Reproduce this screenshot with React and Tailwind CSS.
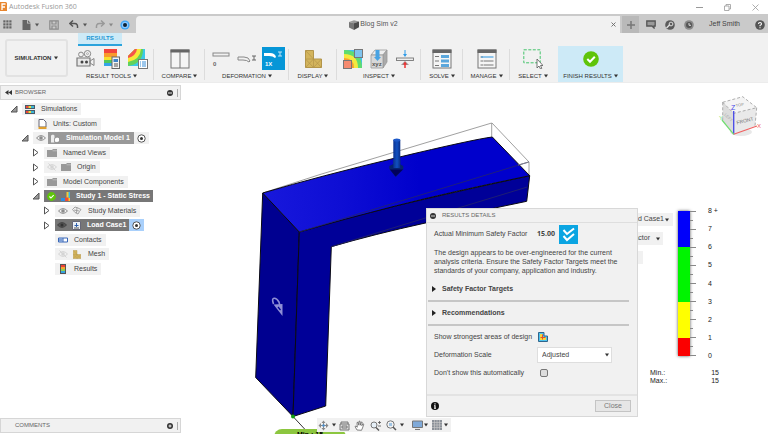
import { useState } from "react";

const Caret = ({ className = "text-[#333]" }) => (
  <svg className={`w-1 h-1 shrink-0 ${className}`} viewBox="0 0 8 8" fill="currentColor">
    <path d="M0 1h8L4 7z" />
  </svg>
);

const Icon = ({ box = "0 0 20 20", className = "w-5 h-5", children }) => (
  <svg className={`shrink-0 ${className}`} viewBox={box} fill="none">
    {children}
  </svg>
);

const AppGrid = () => (
  <Icon box="0 0 9 9" className="w-[9px] h-[9px]">
    {[0, 3, 6].map((y) =>
      [0, 3, 6].map((x) => <rect key={`${x}${y}`} x={x + 0.3} y={y + 0.3} width="2.2" height="2.2" fill="#666" />)
    )}
  </Icon>
);

const FileIcon = () => (
  <Icon box="0 0 9 10" className="w-[9px] h-[10px]">
    <path d="M.5 0H5v3.5h3.5V10h-8z" fill="#666" />
    <path d="M5.8 0l2.7 2.8H5.8z" fill="#666" />
  </Icon>
);

const SaveIcon = () => (
  <Icon box="0 0 10 10" className="w-[10px] h-[10px]">
    <path d="M.8.8h8.4v8.4H.8z" stroke="#8a8a8a" strokeWidth="1.2" />
    <path d="M3 1v3h4V1M3 9V6h4v3" stroke="#8a8a8a" strokeWidth="1.2" />
  </Icon>
);

const UndoIcon = ({ flip }) => (
  <Icon box="0 0 10 9" className={flip ? "w-[10px] h-[9px] -scale-x-100 text-[#999]" : "w-[10px] h-[9px] text-[#555]"}>
    <path d="M4 .5L.8 3.5 4 6.5M1 3.5h4.5C8 3.5 8.8 5 8.5 8" stroke="currentColor" strokeWidth="1.5" />
  </Icon>
);

const ExtensionIcon = () => (
  <Icon box="0 0 10 10" className="w-[10px] h-[10px]">
    <circle cx="5" cy="5" r="4.6" fill="#3ba5f5" />
    <circle cx="5" cy="5" r="3.2" fill="#8cc8ff" />
    <circle cx="5" cy="5" r="2" fill="#0d2233" />
  </Icon>
);

const Cube = () => (
  <Icon box="0 0 10 10" className="w-[10px] h-[10px]">
    <path d="M0 2l5-1.7L10 1.500 5 3.200z" fill="#999" />
    <path d="M0 2l5 1.300V10L0 7.500z" fill="#777" />
    <path d="M5 3.300l5-1.700v5.700L5 10z" fill="#4c4c4c" />
  </Icon>
);

const Camera = () => (
  <Icon className="w-[19px] h-[18px]" box="0 0 19 18">
    <circle cx="5" cy="4.500" r="2.400" stroke="#888" />
    <circle cx="11.500" cy="3.700" r="3.200" stroke="#888" />
    <circle cx="11.500" cy="3.700" r="1" stroke="#888" strokeWidth=".6" />
    <path d="M1 8h13v8H1z" fill="#e8e8e8" stroke="#777" strokeWidth="1.200" />
    <path d="M14 11l4-2.500v7L14 13z" stroke="#888" />
    <circle cx="6" cy="12" r="1.500" fill="#444" />
    <circle cx="10.500" cy="12" r="1.500" fill="#444" />
  </Icon>
);

const ResultDevice = () => (
  <Icon className="w-[18px] h-5" box="0 0 18 20">
    <path d="M1 0h13v4H1z" fill="#f2453c" />
    <path d="M1 4h13v4H1z" fill="#f99a2c" />
    <path d="M1 8h13v3H1z" fill="#f7e02d" />
    <path d="M1 11h13v3H1z" fill="#52c95a" />
    <path d="M1 14h13v3H1z" fill="#34a4e8" />
    <rect x="9" y="8" width="7.500" height="11.500" fill="#f4f4f4" stroke="#666" />
    <path d="M10.500 10h4.500v3h-4.500z" fill="#3b83c8" />
    <path d="M11 15h4M11 17h4" stroke="#555" />
  </Icon>
);

const ResultLegend = () => (
  <Icon className="w-5 h-5">
    <path d="M0 17V7L7 0h10v17z" fill="#3cc8e8" />
    <path d="M0 17V7L7 0h8Q15 15 0 17z" fill="#62d25a" />
    <path d="M0 13V7L7 0h6Q12 11 0 13z" fill="#f7e838" />
    <path d="M0 9V7L7 0h2Q8 7 0 9z" fill="#f5544a" />
    <rect x="10.500" y="10.500" width="9" height="9" fill="#fff" stroke="#777" />
    <path d="M12 13h1M12 15h1M12 17h1M14 13h4M14 15h4M14 17h4" stroke="#3b8fd8" />
  </Icon>
);

const CompareIcon = () => (
  <Icon>
    <rect x="1" y="1" width="18" height="18" fill="#f5f5f5" stroke="#777" />
    <path d="M.5.500h19v3H.5z" fill="#666" />
    <path d="M10 3v16" stroke="#777" />
  </Icon>
);

const FlatBeam = () => (
  <Icon className="w-5 h-5">
    <rect x="2" y="4" width="16" height="3" stroke="#888" />
    <text x="2" y="17" fontSize="6" fontWeight="bold" fill="#666">0</text>
  </Icon>
);

const BentBeam = () => (
  <Icon className="w-5 h-5">
    <path d="M1 8h6q5 0 6 4l-1 1q-2-2-6-2H1z" stroke="#888" />
    <path d="M15 7h4M15 11h4M17 7v4" stroke="#666" />
  </Icon>
);

const BentBeam1x = () => (
  <Icon className="w-5 h-5">
    <path d="M1 4h6q5 0 6 4l-1 1Q10 7 6 7H1z" fill="#fff" />
    <path d="M15 3h4M15 7h4M17 3v4" stroke="#bfe3f7" />
    <text x="2" y="17" fontSize="6" fontWeight="bold" fill="#fff">1X</text>
  </Icon>
);

const MeshIcon = ({ className = "w-[17px] h-[18px]" }) => (
  <Icon className={className} box="0 0 17 18">
    <path d="M.5.500h8v8.500h8v8.500H.5z" fill="#d3b45c" stroke="#b3954a" />
    <path d="M.5 9h8v8.500M.5.500l8 8.500M.5 9l8 8.500M8.500 9l8 8.500M.5 17.500l8-8.500M8.500 17.500l8-8.500" stroke="#b3954a" strokeWidth=".7" />
  </Icon>
);

const ProbeIcon = () => (
  <Icon>
    <path d="M1 1h18v18H1z" fill="#41bdf0" />
    <path d="M1 1q18 0 18 18H1z" fill="#5fdc70" />
    <path d="M1 5q14 0 14 14H1z" fill="#f4ea3f" />
    <path d="M1 9q10 0 10 10H1z" fill="#f7a030" />
    <rect x="11.500" y=".500" width="8" height="8" fill="#7ec3ee" stroke="#777" />
    <rect x=".500" y="11.500" width="8" height="8" fill="#f58b70" stroke="#777" />
  </Icon>
);

const PointIcon = () => (
  <Icon className="w-[18px] h-5" box="0 0 18 20">
    <path d="M1 6l4-5h12l-4 5z" fill="#eee" stroke="#999" strokeWidth=".8" />
    <path d="M13 6l4-5v12l-4 6z" fill="#aaa" stroke="#999" strokeWidth=".8" />
    <path d="M1 6h12v13H1z" fill="#d8d8d8" stroke="#999" strokeWidth=".8" />
    <path d="M5.500 1h4v7h1.500l-3.500 4L4 8h1.500z" fill="#48a3e3" />
    <text x="2" y="17" fontSize="6" fontWeight="bold" fill="#555">xyz</text>
  </Icon>
);

const ReactionIcon = () => (
  <Icon className="w-[18px] h-5" box="0 0 18 20">
    <rect x=".500" y="9" width="17" height="2.500" fill="#eee" stroke="#777" strokeWidth=".9" />
    <path d="M9 1v5" stroke="#2f9be8" />
    <path d="M7 5h4L9 8z" fill="#2f9be8" />
    <path d="M5 16l4-4 4 4z" fill="#999" />
    <path d="M9 14v5" stroke="#e33" strokeWidth="1.500" />
    <path d="M7 15.500h4L9 12.500z" fill="#e33" />
  </Icon>
);

const SolveIcon = () => (
  <Icon>
    <rect x="1" y="1" width="18" height="18" fill="#f5f5f5" stroke="#777" />
    <path d="M.5.500h19v3.500H.5z" fill="#666" />
    <path d="M3 7.500h4M3 12h4M3 16.500h4" stroke="#777" />
    <path d="M9 6h8v3H9zM9 10.500h8v3H9zM9 15h8v3H9z" fill="#5ba7dc" />
  </Icon>
);

const ManageIcon = () => (
  <Icon>
    <rect x="1" y="1" width="18" height="18" fill="#f5f5f5" stroke="#777" />
    <path d="M.5.500h19v3.500H.5z" fill="#666" />
    <path d="M3.500 8H6M3.500 12H6M3.500 16H6M6.500 12h10M6.500 16h10" stroke="#777" />
    <path d="M4 8h12.500" stroke="#48a3e3" strokeWidth="1.200" />
  </Icon>
);

const SelectIcon = () => (
  <Icon>
    <path d="M.8.800h16.400v13H.8z" stroke="#45c46c" strokeDasharray="3 1.500" />
    <path d="M14 10v9l2-2 1.500 3 1.300-.7-1.300-2.800H20z" fill="#fff" stroke="#555" strokeWidth=".8" />
  </Icon>
);

const CheckBadge = ({ className }) => (
  <Icon box="0 0 16 16" className={className}>
    <circle cx="8" cy="8" r="7.800" fill="#5fc40a" />
    <path d="M4.300 8l2.700 2.700 4.800-5" stroke="#fff" strokeWidth="2" />
  </Icon>
);

const Expander = ({ open }) => (
  <button className="w-3 shrink-0 flex items-center" aria-label={open ? "Collapse" : "Expand"}>
    {open ? (
      <Icon box="0 0 8 8" className="w-2 h-2">
        <path d="M7 1v6H1z" fill="#999" stroke="#555" />
      </Icon>
    ) : (
      <Icon box="0 0 7 9" className="w-[7px] h-[9px]">
        <path d="M1.500 1l4.500 3.500L1.500 8z" fill="#fff" stroke="#555" />
      </Icon>
    )}
  </button>
);

const Eye = ({ dim }) => (
  <Icon box="0 0 10 8" className={dim ? "w-[10px] h-2 text-[#d4d4d4]" : "w-[10px] h-2 text-[#8c8c8c]"}>
    <path d="M.5 4Q5-.8 9.500 4 5 8.800.5 4z" stroke="currentColor" />
    <circle cx="5" cy="4" r="1.800" fill="currentColor" />
    {dim && <path d="M1.500.500l7 7" stroke="currentColor" />}
  </Icon>
);

const DarkEye = () => (
  <Icon box="0 0 10 8" className="w-[10px] h-2">
    <path d="M.5 4Q5-.8 9.500 4 5 8.800.5 4z" fill="#555" stroke="#444" />
    <circle cx="5" cy="4" r="1.500" fill="#333" />
  </Icon>
);

const Folder = () => (
  <Icon box="0 0 10 8" className="w-[10px] h-2">
    <path d="M0 1h5l1-1h4v8H0z" fill="#999" />
    <path d="M5.500 1.800H10" stroke="#ccc" strokeWidth=".7" />
  </Icon>
);

const StackIcon = () => (
  <Icon box="0 0 10 9" className="w-[10px] h-[9px]">
    <path d="M0 0h10v4H0zM0 5h10v4H0z" fill="#4a5a68" />
    <path d="M1 1h2.500v2H1zM1 6h2.500v2H1z" fill="#f0453a" />
    <path d="M3.500 1H6v2H3.500zM3.500 6H6v2H3.500z" fill="#f3d93a" />
    <path d="M6 1h3v2H6zM6 6h3v2H6z" fill="#3cb8d8" />
  </Icon>
);

const UnitsIcon = () => (
  <Icon box="0 0 9 10" className="w-[9px] h-[10px]">
    <path d="M1 .500h4.500L8 3v5H1z" fill="#fff" stroke="#667" />
    <path d="M.5 7.800h8V10h-8z" fill="#e0a030" />
  </Icon>
);

const ModelIcon = () => (
  <Icon box="0 0 10 9" className="w-[10px] h-[9px]">
    <path d="M1 1.500L3 .500l1.500 1v7H1z" fill="#eee" />
    <path d="M4.500 4.500L7 3l2.500 1v3.500l-2.500 1-2.500-.5z" fill="#fff" stroke="#777" strokeWidth=".6" />
  </Icon>
);

const StressIcon = () => (
  <Icon box="0 0 9 9" className="w-[9px] h-[9px]">
    <path d="M5.500 0H9v9H5.500z" fill="#f7c832" />
    <path d="M7.500 0H9v6H7.500z" fill="#35b5e8" />
    <path d="M0 6h5v3H0z" fill="#2f8de0" />
    <path d="M4 5.500h3.500V9H4z" fill="#ef4b35" />
  </Icon>
);

const MaterialIcon = () => (
  <Icon box="0 0 10 9" className="w-[10px] h-[9px]">
    <path d="M.5 3.500L3 1l3 1 3 1.500-1.500 2L6 8 3 6.500z M2 4l5 1M5 1.500L4.500 7" stroke="#999" strokeWidth=".9" />
  </Icon>
);

const LoadIcon = () => (
  <Icon box="0 0 9 9" className="w-[9px] h-[9px]">
    <path d="M.5.500h8v8h-8z" fill="#e9eef5" stroke="#667" />
    <path d="M4.500 2v4M2.500 4.500h4" stroke="#2d5fae" />
    <path d="M2 7h5" stroke="#555" />
  </Icon>
);

const ContactIcon = () => (
  <Icon box="0 0 10 6" className="w-[10px] h-[6px]">
    <path d="M.5 1h9v4h-9z" fill="#fff" stroke="#3867b8" />
    <path d="M1 1h3.500v4H1z" fill="#7d9fd6" />
    <path d="M5 1v4" stroke="#3867b8" />
  </Icon>
);

const ResultsIcon = () => (
  <Icon box="0 0 6 10" className="w-[6px] h-[10px]">
    <path d="M0 0h6v10H0z" fill="#555" />
    <path d="M1 1h4v2H1z" fill="#ee4035" />
    <path d="M1 3h4v2H1z" fill="#f6a430" />
    <path d="M1 5h4v2H1z" fill="#8fd14f" />
    <path d="M1 7h4v2H1z" fill="#35a4e0" />
  </Icon>
);

const RadioDot = () => (
  <Icon box="0 0 9 9" className="w-[9px] h-[9px]">
    <circle cx="4.500" cy="4.500" r="3.700" fill="#fff" stroke="#444" strokeWidth=".9" />
    <circle cx="4.500" cy="4.500" r="1.500" fill="#333" />
  </Icon>
);

const light = "bg-[#f1f1f1] text-[#444] pl-px pr-1";
const dark = "bg-[#777] text-white font-bold pr-[3px]";

const tree = [
  { name: "Simulations", pad: "pl-[10px]", open: true, icons: [StackIcon], chip: light },
  { name: "Units: Custom", pad: "pl-[22px]", icons: [UnitsIcon], chip: light },
  { name: "Simulation Model 1", pad: "pl-[21px]", open: true, outer: [Eye], icons: [ModelIcon], chip: "bg-[#999] text-white font-bold pr-1", radio: "bg-[#f1f1f1]" },
  { name: "Named Views", pad: "pl-[32px]", open: false, icons: [Folder], chip: light },
  { name: "Origin", pad: "pl-[32px]", open: false, icons: [() => <Eye dim />, Folder], chip: light },
  { name: "Model Components", pad: "pl-[32px]", open: false, icons: [Folder], chip: light },
  { name: "Study 1 - Static Stress", pad: "pl-[32px]", open: true, icons: [() => <CheckBadge className="w-[9px] h-[9px]" />, StressIcon], chip: dark },
  { name: "Study Materials", pad: "pl-[43px]", open: false, icons: [Eye, MaterialIcon], chip: light },
  { name: "Load Case1", pad: "pl-[43px]", open: false, icons: [DarkEye, LoadIcon], chip: dark, radio: "bg-[#a9d0fb]" },
  { name: "Contacts", pad: "pl-[43px]", icons: [ContactIcon], chip: light },
  { name: "Mesh", pad: "pl-[43px]", icons: [() => <Eye dim />, () => <MeshIcon className="w-2 h-[9px]" />], chip: light },
  { name: "Results", pad: "pl-[43px]", icons: [ResultsIcon], chip: light },
];

function TreeRow({ row }) {
  return (
    <li className={`flex items-center ${row.pad}`}>
      {row.open === undefined ? <span className="w-3" /> : <Expander open={row.open} />}
      {row.outer?.map((I, i) => (
        <span key={i} className="w-[15px] h-3 bg-[#f1f1f1] flex items-center justify-center">
          <I />
        </span>
      ))}
      <span className={`flex items-center h-3 ${row.chip}`}>
        {row.icons.map((I, i) => (
          <span key={i} className="w-[14px] flex justify-center">
            <I />
          </span>
        ))}
        <span className="ml-1 whitespace-nowrap">{row.name}</span>
      </span>
      {row.radio && (
        <span className={`w-[15px] h-3 flex items-center justify-center ${row.radio}`}>
          <RadioDot />
        </span>
      )}
    </li>
  );
}

function PanelBar({ title, icon, collapse }) {
  return (
    <div className="h-[15px] flex items-center border border-[#d6d6d6] bg-[#f1f1f1] text-[6px] text-[#666] pr-px">
      <span className="w-[14px] flex justify-center">
        {collapse && (
          <Icon box="0 0 7 5" className="w-[7px] h-[5px]">
            <path d="M3.500 0v5L0 2.500zM7 0v5L3.500 2.500z" fill="#333" />
          </Icon>
        )}
      </span>
      <span className="flex-1">{title}</span>
      <Icon box="0 0 6 6" className="w-[6px] h-[6px]">
        <circle cx="3" cy="3" r="3" fill="#333" />
        <path d={icon === "plus" ? "M1.500 3h3M3 1.500v3" : "M1 3h4"} stroke="#fff" strokeWidth=".9" />
      </Icon>
      <span className="ml-1 h-2 w-[2px] border-l border-[#aaa]" />
    </div>
  );
}

const groups = [
  { name: "RESULT TOOLS", width: "w-[85px]", icons: [Camera, ResultDevice, ResultLegend] },
  { name: "COMPARE", width: "w-[51px]", icons: [CompareIcon] },
  { name: "DEFORMATION", width: "w-[84px]", icons: [FlatBeam, BentBeam, BentBeam1x], active: 2 },
  { name: "DISPLAY", width: "w-[48px]", icons: [MeshIcon] },
  { name: "INSPECT", width: "w-[84px]", icons: [ProbeIcon, PointIcon, ReactionIcon] },
  { name: "SOLVE", width: "w-[42px]", icons: [SolveIcon] },
  { name: "MANAGE", width: "w-[47px]", icons: [ManageIcon] },
  { name: "SELECT", width: "w-[46px]", icons: [SelectIcon], last: true },
];

function ToolGroup({ group }) {
  return (
    <div className={`flex flex-col items-center shrink-0 relative ${group.width}`}>
      <div className="flex gap-[3px] h-6 mt-px">
        {group.icons.map((I, i) => (
          <button
            key={i}
            aria-label={`${group.name} ${i + 1}`}
            className={`w-[23px] h-[23px] flex items-center justify-center ${i === group.active ? "bg-[#0696d7]" : ""}`}
          >
            <I />
          </button>
        ))}
      </div>
      <button className="flex items-center gap-[2px] h-[10px] whitespace-nowrap">
        {group.name}
        <Caret />
      </button>
      {!group.last && <span className="absolute right-0 top-[3px] h-[31px] w-px bg-[#dcdcdc]" />}
    </div>
  );
}

function TopBar() {
  return (
    <>
      <header className="h-[14px] shrink-0 flex items-center bg-white text-[7px] text-[#999]">
        <Icon box="0 0 7 10" className="w-[7px] h-[10px]">
          <path d="M0 0h6l1 1v8H0z" fill="#e8862e" />
          <path d="M2 8V2h3.500M2 5h3" stroke="#fff" strokeWidth="1.300" />
        </Icon>
        <h1 className="ml-[2px] flex-1 font-['Open_Sans',sans-serif]">Autodesk Fusion 360</h1>
        <div className="flex items-center gap-[21px] pr-[9px] text-[#999]">
          <button aria-label="Minimize">
            <Icon box="0 0 7 7" className="w-[7px] h-[7px]"><path d="M0 3.500h7" stroke="#999" /></Icon>
          </button>
          <button aria-label="Restore">
            <Icon box="0 0 7 7" className="w-[7px] h-[7px]">
              <path d="M.5 2h4.500v4.500H.5zM2 2V.500h4.500V5H5" stroke="#999" strokeWidth=".8" />
            </Icon>
          </button>
          <button aria-label="Close window">
            <Icon box="0 0 7 7" className="w-[7px] h-[7px]"><path d="M.5.500l6 6M6.500.500l-6 6" stroke="#999" strokeWidth=".8" /></Icon>
          </button>
        </div>
      </header>
      <div className="h-[19px] shrink-0 flex bg-[#cacaca] pt-[2px]">
        <div className="w-[136px] shrink-0 flex items-center pl-[3px]">
          <button aria-label="Apps"><AppGrid /></button>
          <button aria-label="File" className="ml-[10px] flex items-center gap-1"><FileIcon /><Caret className="text-[#555]" /></button>
          <button aria-label="Save" className="ml-[10px]"><SaveIcon /></button>
          <button aria-label="Undo" className="ml-[10px] flex items-center gap-1"><UndoIcon /><Caret className="text-[#555]" /></button>
          <button aria-label="Redo" className="ml-[8px] flex items-center gap-1"><UndoIcon flip /><Caret className="text-[#888]" /></button>
          <button aria-label="Extensions" className="ml-[7px]"><ExtensionIcon /></button>
        </div>
        <div className="flex-1 flex items-center bg-[#f1f1f1] rounded-tl-sm">
          <span className="flex-1 flex items-center justify-center gap-px text-[7px] text-[#555]">
            <Cube />
            Blog Sim v2
          </span>
          <button aria-label="Close tab" className="mr-1">
            <Icon box="0 0 5 5" className="w-[5px] h-[5px]"><path d="M.5.500l4 4M4.500.500l-4 4" stroke="#666" strokeWidth=".9" /></Icon>
          </button>
        </div>
        <button aria-label="New tab" className="w-[17px] ml-[2px] flex items-center justify-center bg-[#b9b9b9]">
          <Icon box="0 0 8 8" className="w-2 h-2"><path d="M0 4h8M4 0v8" stroke="#777" strokeWidth="1.500" /></Icon>
        </button>
        <div className="w-[129px] shrink-0 flex items-center justify-between pl-[7px] pr-[3px] text-[7px] text-[#444]">
          <button aria-label="Messages">
            <Icon box="0 0 10 9" className="w-[10px] h-[9px]"><path d="M.8 1h8.400v5H8v2L6 6H.8z" fill="#999" stroke="#555" strokeWidth="1.300" /></Icon>
          </button>
          <button aria-label="Job status">
            <Icon box="0 0 10 10" className="w-[10px] h-[10px]">
              <circle cx="5" cy="5" r="4.800" fill="#5a5a5a" />
              <path d="M1.500 8L5 4.500" stroke="#ddd" strokeWidth="1.500" />
              <circle cx="6" cy="4" r="1.900" stroke="#ddd" />
            </Icon>
          </button>
          <button aria-label="Recent">
            <Icon box="0 0 10 10" className="w-[10px] h-[10px]">
              <circle cx="5" cy="5" r="4.800" fill="#8a8a8a" />
              <circle cx="5" cy="5" r="3" fill="#555" />
              <path d="M5 3v2.300h2" stroke="#ddd" />
            </Icon>
          </button>
          <button className="px-[6px] whitespace-nowrap">Jeff Smith</button>
          <button aria-label="Help">
            <Icon box="0 0 10 10" className="w-[10px] h-[10px]">
              <circle cx="5" cy="5" r="4.800" fill="#555" />
              <path d="M3.500 4q0-1.500 1.500-1.500T6.500 4Q6.500 4.800 5 5.500V6.300M5 7.200v1" stroke="#fff" strokeWidth="1.100" />
            </Icon>
          </button>
        </div>
      </div>
      <nav className="h-[50px] shrink-0 flex items-start bg-[#f1f1f1] border-b border-[#ececec] text-[6px] text-[#333]">
        <button className="ml-[5px] mt-[6px] w-[63px] h-[38px] shrink-0 flex items-center justify-center gap-[3px] rounded-[3px] border-2 border-[#e2e2e2] font-bold">
          SIMULATION
          <Caret />
        </button>
        <div className="ml-px flex-1">
          <button className="ml-[9px] w-11 h-[13px] block border-b-2 border-[#2ba3dc] bg-[#cdeaf7] text-[#1f97d4] font-bold text-center">RESULTS</button>
          <div className="flex">
            {groups.map((g) => (
              <ToolGroup key={g.name} group={g} />
            ))}
            <button className="ml-[2px] w-[65px] h-9 shrink-0 flex flex-col items-center bg-[#cdeaf7]">
              <span className="h-[25px] flex items-center"><CheckBadge className="w-4 h-4" /></span>
              <span className="flex items-center gap-[2px] h-[10px] whitespace-nowrap">
                FINISH RESULTS
                <Caret />
              </span>
            </button>
          </div>
        </div>
      </nav>
    </>
  );
}

function Model() {
  return (
    <svg className="absolute left-0 top-0 w-[768px] h-[351px]" viewBox="0 83 768 351" fill="none">
      <defs>
        <linearGradient id="top" x1="262" y1="200" x2="420" y2="190" gradientUnits="userSpaceOnUse">
          <stop offset="0" stopColor="#1818dc" />
          <stop offset=".5" stopColor="#0e0ed4" />
          <stop offset="1" stopColor="#0000cc" />
        </linearGradient>
        <linearGradient id="shaft" x1="393" y1="0" x2="401" y2="0" gradientUnits="userSpaceOnUse">
          <stop offset="0" stopColor="#0a2f8c" />
          <stop offset=".5" stopColor="#1150c0" />
          <stop offset="1" stopColor="#06257a" />
        </linearGradient>
      </defs>
      <path d="M262.700 193L320 174.500L491.700 123V137" stroke="#888" strokeWidth=".8" />
      <path d="M492 123l37 39v14" stroke="#888" strokeWidth=".8" />
      <g stroke="#0a0a14" strokeLinejoin="round">
        <path d="M262.700 193L299.300 232L293 416.500L255.700 377.500z" fill="#000090" />
        <path d="M299.300 232Q345 218 396.700 205.700T529.700 175.700L526.700 201.300Q480 211 426.700 222.700T331.300 246.700L325.700 406L293 416.500z" fill="#000098" />
        <path d="M262.700 193Q320 176 396.700 157.700T492.300 137L529.700 175.700Q450 192 396.700 205.700T299.300 232z" fill="url(#top)" />
      </g>
      <path d="M528.700 162L299.300 232M527.300 187L331.300 246.700" stroke="#26266a" strokeWidth=".8" />
      <path d="M518 165l11-3" stroke="#888" strokeWidth=".8" />
      <path d="M393.300 140h7v30h-7z" fill="url(#shaft)" />
      <ellipse cx="396.800" cy="140" rx="3.500" ry="1.500" fill="#1c58c8" />
      <path d="M389.300 166q7-5 14 0v3l-7.500 8-6.500-8z" fill="#06236e" />
      <path d="M390 169.500h13l-7.500 7z" fill="#00005a" />
      <path d="M393.300 160h7v8h-7z" fill="url(#shaft)" />
      <path d="M273.500 304q-2-5.500.5-5.800t5 3.800l1 4" stroke="#8f8fd6" strokeWidth="1.600" />
      <path d="M273.500 304.500l9-.5v12z" fill="#8f8fd6" />
      <path d="M278 307l2.500 3" stroke="#000090" strokeWidth="1.200" />
      <path d="M293 416.500l13 14" stroke="#333" />
      <circle cx="293" cy="416.500" r="2" fill="#12a012" />
    </svg>
  );
}

function ViewCube() {
  return (
    <svg className="absolute right-[4px] top-[8px] w-[46px] h-12" viewBox="718 91 46 48" fill="none" fontFamily="Liberation Sans, sans-serif">
      <ellipse cx="741" cy="132" rx="11" ry="4" fill="#e8e8e8" />
      <path d="M722.700 102.300L742.700 96.700L756.700 107.700L733.700 113.300z" fill="#f4f4f4" />
      <path d="M722.700 102.300L733.700 113.300V134.300L722.700 120z" fill="#dcdcdc" />
      <path d="M733.700 113.300L756.700 107.700L755 126L733.700 134.300z" fill="#e9e9e9" />
      <path d="M722.700 102.300L742.700 96.700L756.700 107.700L733.700 113.300zM722.700 102.300V120M756.700 107.700L755 126" stroke="#999" strokeWidth=".8" strokeDasharray="3 2" />
      <text x="737" y="124.500" fontSize="5" fill="#777" transform="rotate(-14 737 124)">FRONT</text>
      <text x="736" y="107" fontSize="4" fill="#888" transform="rotate(-10 736 107)">TOP</text>
      <text x="724" y="115" fontSize="4" fill="#aaa" transform="rotate(45 724 115)">LEFT</text>
      <path d="M733.700 134.300V111" stroke="#4747e8" strokeWidth="1.300" />
      <path d="M733.700 134.300L757 126" stroke="#f06060" strokeWidth="1.200" />
      <path d="M733.700 134.300L722 120" stroke="#6fdc6f" strokeWidth="1.200" />
      <text x="731" y="109.500" fontSize="7" fill="#4747e8">Z</text>
      <text x="757" y="127.500" fontSize="6" fill="#f06060">X</text>
      <text x="719" y="119.500" fontSize="6" fill="#6fdc6f">Y</text>
    </svg>
  );
}

function Legend() {
  const marks = ["8 +", "7", "6", "5", "4", "3", "2", "1", "0"];
  return (
    <div className="absolute right-[45px] top-[123px] w-[73px] text-[7px] text-[#222]">
      <div className="flex ml-[28px] h-[155px]">
        <div className="my-[5px] w-3 flex flex-col shadow-[0_0_3px_#555]">
          <div className="grow-2 basis-0 bg-[#0000fa]" />
          <div className="grow-3 basis-0 bg-[#00f400]" />
          <div className="grow-2 basis-0 bg-[#ffff00]" />
          <div className="grow-1 basis-0 bg-[#fb0000]" />
        </div>
        <svg className="my-[5px] w-2 h-[145px]" viewBox="0 0 8 145">
          {Array.from({ length: 17 }, (_, i) => (
            <path key={i} d={`M0 ${i * 9 + 0.5}h${i % 2 ? 3 : 6}`} stroke="#888" />
          ))}
        </svg>
        <ul className="ml-[10px] flex flex-col justify-between whitespace-nowrap">
          {marks.map((m) => (
            <li key={m} className="leading-[10px]">{m}</li>
          ))}
        </ul>
      </div>
      <dl className="mt-2 grid grid-cols-[1fr_auto] leading-[8px] pr-[4px]">
        <dt>Min.:</dt>
        <dd>15</dd>
        <dt>Max.:</dt>
        <dd>15</dd>
      </dl>
    </div>
  );
}

function Section({ title }) {
  return (
    <button className="h-6 w-full flex items-center gap-[6px] pl-[4px] border-b-2 border-[#c6c6c6] font-bold">
      <Icon box="0 0 4 6" className="w-1 h-[6px]"><path d="M0 0l4 3-4 3z" fill="#222" /></Icon>
      {title}
    </button>
  );
}

function ResultsDetails() {
  const [scale, setScale] = useState("Adjusted");
  const [hide, setHide] = useState(false);

  return (
    <section className="absolute left-[426px] top-[125px] w-[212px] border border-[#d8d8d8] bg-[#f1f1f1] text-[7px] text-[#444]">
      <h2 className="h-[14px] flex items-center gap-[6px] pl-[3px] border-b border-[#dedede] text-[6px] text-[#666]">
        <Icon box="0 0 6 6" className="w-[6px] h-[6px]">
          <circle cx="3" cy="3" r="3" fill="#333" />
          <path d="M1 3h4" stroke="#fff" strokeWidth=".8" />
        </Icon>
        RESULTS DETAILS
      </h2>
      <div className="flex items-center pl-[7px] h-[22px]">
        <span className="w-[100px] whitespace-nowrap">Actual Minimum Safety Factor</span>
        <span className="ml-[3px] w-[22px] font-bold font-['Open_Sans',sans-serif]">15.00</span>
        <Icon box="0 0 19 19" className="w-[19px] h-[19px]">
          <path d="M0 0h19v19H0z" fill="#0ba5e2" />
          <path d="M4.500 5l3.500 4 7-5.500M4.500 11l3.500 4 7-6" stroke="#fff" strokeWidth="2" />
        </Icon>
      </div>
      <p className="mt-[3px] pl-[7px] leading-[9px] whitespace-nowrap">
        The design appears to be over-engineered for the current
        <br />
        analysis criteria. Ensure the Safety Factor Targets meet the
        <br />
        standards of your company, application and industry.
      </p>
      <div className="ml-px mr-2 mt-[3px]">
        <Section title="Safety Factor Targets" />
        <Section title="Recommendations" />
      </div>
      <div className="pl-[7px] pt-[2px] grid grid-cols-[103px_1fr] auto-rows-[18px] items-center">
        <span>Show strongest areas of design</span>
        <button aria-label="Show strongest areas" className="w-[10px] ml-px">
          <Icon box="0 0 10 10" className="w-[10px] h-[10px]">
            <path d="M.5.500H6V4h3.500v5.500h-9z" fill="#4cc3ee" stroke="#31658c" />
            <path d="M2 2h2.500v3H8v3H2z" fill="#f6d83a" />
            <path d="M4.500 2.500v5M2.500 5.500h5" stroke="#e2502d" />
          </Icon>
        </button>
        <label htmlFor="scale">Deformation Scale</label>
        <span className="relative w-[75px]">
          <select
            id="scale"
            value={scale}
            onChange={(e) => setScale(e.target.value)}
            className="block w-full h-4 appearance-none border border-[#dedede] bg-white pl-1 leading-[14px]"
          >
            <option>Adjusted</option>
            <option>Actual</option>
          </select>
          <span className="absolute right-[3px] top-[6px] pointer-events-none flex"><Caret /></span>
        </span>
        <label htmlFor="hide">Don't show this automatically</label>
        <input
          id="hide"
          type="checkbox"
          checked={hide}
          onChange={(e) => setHide(e.target.checked)}
          className="ml-[3px] w-2 h-2 appearance-none rounded-[2px] border border-[#777] bg-[#ddd] checked:bg-[#555]"
        />
      </div>
      <footer className="mt-[12px] h-[22px] flex items-center justify-between border-t-2 border-[#e3e3e3] pl-1 pr-[6px]">
        <Icon box="0 0 8 8" className="w-2 h-2">
          <circle cx="4" cy="4" r="4" fill="#111" />
          <path d="M4 1.200v1.300M4 3.300v3.200M3 3.700h1M3 6.300h2" stroke="#fff" strokeWidth="1.100" />
        </Icon>
        <button className="w-9 h-3 border border-[#c4c4c4] bg-[#e6e6e6] text-[#777] leading-[10px]">Close</button>
      </footer>
    </section>
  );
}

function NavBar() {
  return (
    <div className="absolute left-[317px] top-[335px] w-[134px] h-[14px] flex items-center pl-[1px] bg-[#f1f1f1]">
      <button aria-label="Orbit" className="flex items-center gap-[3px]">
        <Icon box="0 0 11 11" className="w-[11px] h-[11px]">
          <path d="M.5 5.500L3 3v5zM10.500 5.500L8 3v5zM5.500.500L3.500 3h4zM5.500 10.500L3.500 8h4z" fill="#888" />
          <path d="M3 5.500h5M5.500 3v5" stroke="#888" />
          <circle cx="5.500" cy="5.500" r="1.300" fill="#4a90d0" />
        </Icon>
        <Caret />
      </button>
      <button aria-label="Look at" className="ml-[3px]">
        <Icon box="0 0 11 11" className="w-[11px] h-[11px]">
          <path d="M1 4h9v6H1zM2 4V2h7v2" fill="#ddd" stroke="#777" />
          <path d="M3 6h5v2H3z" stroke="#777" />
        </Icon>
      </button>
      <button aria-label="Pan" className="ml-1">
        <Icon box="0 0 11 11" className="w-[11px] h-[11px]">
          <path d="M3 10L1 6.500l1-.5 1.300 1.200L3 2.500l1-.3.800 3L5 1.200h1l.3 4L7.200 2l1 .2-.4 3.500L9 3.800l.8.400L8.500 8l-1 2.300z" fill="#fff" stroke="#666" strokeWidth=".8" />
        </Icon>
      </button>
      <button aria-label="Zoom" className="ml-[5px]">
        <Icon box="0 0 11 11" className="w-[11px] h-[11px]">
          <circle cx="4" cy="5" r="3" fill="#e6f0f8" stroke="#777" />
          <path d="M6 7.500L9 10.500" stroke="#555" strokeWidth="1.400" />
          <path d="M8 2.500h3M9.500 1v3M8 6h3" stroke="#555" strokeWidth=".8" />
        </Icon>
      </button>
      <button aria-label="Zoom window" className="ml-[5px] flex items-center gap-[3px]">
        <Icon box="0 0 11 11" className="w-[11px] h-[11px]">
          <circle cx="4.500" cy="4.500" r="3.700" stroke="#777" />
          <path d="M3 3h3v3H3z" fill="#9fc4e4" />
          <path d="M7 7l3 3" stroke="#555" strokeWidth="1.500" />
        </Icon>
        <Caret />
      </button>
      <button aria-label="Display settings" className="ml-[8px] flex items-center gap-px">
        <Icon box="0 0 11 10" className="w-[11px] h-[10px]">
          <path d="M.5 1h10v6.500H.5z" fill="#7fa9d8" stroke="#777" />
          <path d="M3 9.500h5" stroke="#777" strokeWidth="1.200" />
        </Icon>
        <Caret />
      </button>
      <button aria-label="Grid" className="ml-[4px] flex items-center gap-[2px]">
        <Icon box="0 0 10 10" className="w-[10px] h-[10px]">
          <path d="M0 0h10v10H0z" fill="#8a9098" />
          <path d="M0 2.500h10M0 5h10M0 7.500h10M2.500 0v10M5 0v10M7.500 0v10" stroke="#ccc" strokeWidth=".6" />
        </Icon>
        <Caret />
      </button>
    </div>
  );
}

export default function App() {
  return (
    <div className="h-screen flex flex-col overflow-hidden bg-white font-['Liberation_Sans',Arial,sans-serif]">
      <TopBar />
      <main className="relative flex-1 min-h-0 overflow-hidden">
        <Model />
        <div className="relative w-[181px] h-full pt-[2px] pb-px flex flex-col">
          <PanelBar title="BROWSER" icon="minus" collapse />
          <ul className="mt-[2px] h-[174px] grid grid-rows-12 text-[7px]">
            {tree.map((row) => (
              <TreeRow key={row.name} row={row} />
            ))}
          </ul>
          <div className="mt-auto">
            <PanelBar title="COMMENTS" icon="plus" />
          </div>
        </div>
        <div className="absolute left-[274px] top-[346px] w-[72px] h-4 rounded-lg bg-[#8cc63f] text-[7px] font-bold text-center leading-[12px]">
          Min.: 15
        </div>
        <NavBar />
        <div className="absolute left-[632px] top-[130px] flex flex-col items-start gap-[6px] text-[7px] text-[#444]">
          <button className="w-[41px] h-[13px] flex items-center justify-end gap-px pr-1 bg-[#f1f1f1] whitespace-nowrap">
            Load Case1
            <Caret />
          </button>
          <button className="w-[31px] h-[13px] flex items-center justify-end gap-[6px] pr-[3px] bg-[#f1f1f1] whitespace-nowrap">
            Safety Factor
            <Caret />
          </button>
          <span className="w-[11px] h-[13px] bg-[#f1f1f1]" />
        </div>
        <ViewCube />
        <Legend />
        <ResultsDetails />
      </main>
    </div>
  );
}
